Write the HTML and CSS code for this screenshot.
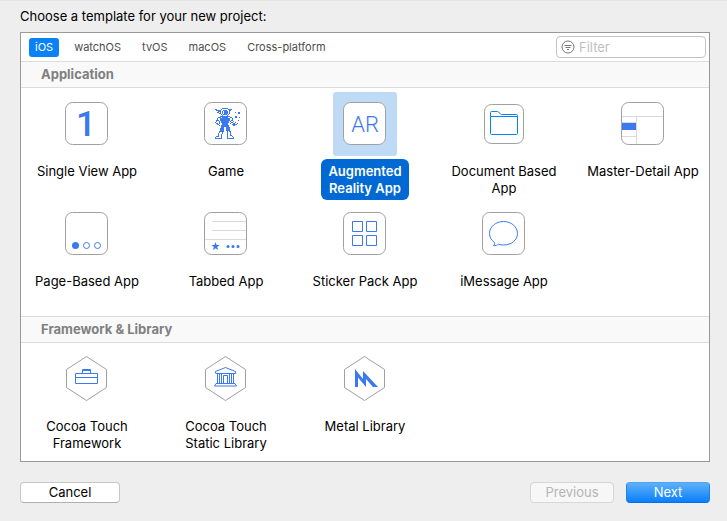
FILE: index.html
```
<!DOCTYPE html>
<html lang="en">
<head>
	<meta charset="UTF-8">
	<title>New Project</title>
	<link rel="stylesheet" href="styles.css">
</head>
<body>
	<h1 class="title">Choose a template for your new project:</h1>
	<main class="panel">
		<div class="toolbar">
			<nav class="tabs">
				<button type="button" class="tab active">iOS</button>
				<button type="button" class="tab">watchOS</button>
				<button type="button" class="tab">tvOS</button>
				<button type="button" class="tab">macOS</button>
				<button type="button" class="tab">Cross-platform</button>
			</nav>
			<label class="filter">
				<svg width="14" height="14" viewBox="0 0 14 14" fill="none" stroke="#777">
					<circle cx="7" cy="7" r="6"/>
					<path d="M3.5 5.5h7M4.5 7.5h5M6 9.5h2"/>
				</svg>
				<input type="text" placeholder="Filter" aria-label="Filter">
			</label>
		</div>

		<section>
			<h2 class="heading">Application</h2>
			<div class="grid">
				<button type="button" class="item">
					<svg class="icon" viewBox="0 0 64 64">
						<rect class="frame" x="10.5" y="10.5" width="42" height="42" rx="7"/>
						<text class="one" x="31" y="44">1</text>
					</svg>
					<span class="label">Single View App</span>
				</button>
				<button type="button" class="item">
					<svg class="icon" viewBox="0 0 64 64">
						<rect class="frame" x="10.5" y="10.5" width="42" height="42" rx="7"/>
						<!-- pixel robot, one run per row -->
						<path class="line" shape-rendering="crispEdges" transform="translate(21 16.5)" d="M7 0h6M0 1h2M6 1h1M13 1h4M1 2h5M8 2h4M14 2h2M3 3h3M7 3h1M9 3h4M14 3h1M2 4h2M5 4h1M7 4h1M9 4h4M14 4h1M4 5h2M7 5h1M9 5h4M14 5h1M6 6h1M8 6h4M13 6h1M7 7h1M12 7h1M5 8h10M3 9h3M7 9h6M15 9h2M2 10h1M5 10h10M17 10h1M2 11h1M5 11h10M17 11h1M1 12h3M5 12h10M16 12h2M1 13h1M4 13h1M6 13h8M15 13h1M18 13h1M0 14h1M4 14h1M6 14h8M16 14h2M20 14h1M1 15h2M4 15h1M7 15h6M15 15h1M18 15h2M22 15h1M2 16h2M7 16h6M17 16h5M4 17h1M6 17h8M18 17h2M6 18h8M6 19h3M11 19h4M5 20h4M11 20h4M5 21h4M11 21h4M5 22h4M11 22h4M4 23h5M12 23h1M14 23h2M4 24h1M7 24h1M12 24h1M15 24h1M3 25h1M7 25h1M12 25h1M15 25h1M3 26h1M6 26h1M12 26h1M15 26h1M3 27h1M6 27h1M12 27h1M15 27h2M1 28h3M6 28h1M12 28h1M17 28h1M0 29h1M6 29h1M12 29h1M18 29h1M0 30h7M12 30h7M20 4h1M23 4h2M23 5h2M20 8h2M20 9h2M24 9h1M23 12h1"/>
					</svg>
					<span class="label">Game</span>
				</button>
				<button type="button" class="item selected">
					<svg class="icon" viewBox="0 0 64 64">
						<rect class="frame" x="10.5" y="10.5" width="42" height="42" rx="7"/>
						<text class="ar" x="32" y="40">AR</text>
					</svg>
					<span class="label">Augmented<br>Reality App</span>
				</button>
				<button type="button" class="item">
					<svg class="icon" viewBox="0 0 64 64">
						<rect class="frame" x="12.5" y="12.5" width="39" height="39" rx="7"/>
						<path class="line folder" d="M18.5 24.5v-4q0-1 1-1h6q1 0 2 1.5t2 1.5h15q1 0 1 1v18q0 1-1 1h-25q-1 0-1-1v-17h27"/>
					</svg>
					<span class="label">Document Based<br>App</span>
				</button>
				<button type="button" class="item">
					<svg class="icon" viewBox="0 0 64 64">
						<path class="rule" d="M11 24.5h41M25.5 25v28M11 30.5h14M11 37.5h14M11 44.5h14"/>
						<path class="solid" d="M11 31h14v7h-14z"/>
						<rect class="frame open" x="10.5" y="10.5" width="42" height="42" rx="7"/>
					</svg>
					<span class="label">Master-Detail App</span>
				</button>
				<button type="button" class="item">
					<svg class="icon" viewBox="0 0 64 64">
						<rect class="frame" x="10.5" y="10.5" width="42" height="42" rx="7"/>
						<circle class="solid" cx="20.5" cy="43.5" r="3.5"/>
						<circle class="line" cx="31.5" cy="43.5" r="3"/>
						<circle class="line" cx="42.5" cy="43.5" r="3"/>
					</svg>
					<span class="label">Page-Based App</span>
				</button>
				<button type="button" class="item">
					<svg class="icon" viewBox="0 0 64 64">
						<path class="rule" d="M18 19.5h34M18 28.5h34M11 37.5h41"/>
						<path class="solid" d="M21.5 40l1.100 2.900 3 .1-2.400 1.900.9 3-2.600-1.700-2.600 1.700.9-3-2.400-1.900 3-.1z"/>
						<circle class="solid" cx="34" cy="44.5" r="1.5"/>
						<circle class="solid" cx="39" cy="44.5" r="1.5"/>
						<circle class="solid" cx="44" cy="44.5" r="1.5"/>
						<rect class="frame open" x="10.5" y="10.5" width="42" height="42" rx="7"/>
					</svg>
					<span class="label">Tabbed App</span>
				</button>
				<button type="button" class="item">
					<svg class="icon" viewBox="0 0 64 64">
						<rect class="frame" x="10.5" y="10.5" width="42" height="42" rx="7"/>
						<path class="line" d="M19.5 19.5h10v10h-10zM33.5 19.5h10v10h-10zM19.5 33.5h10v10h-10zM33.5 33.5h10v10h-10z"/>
					</svg>
					<span class="label">Sticker Pack App</span>
				</button>
				<button type="button" class="item">
					<svg class="icon" viewBox="0 0 64 64">
						<rect class="frame" x="10.5" y="10.5" width="42" height="42" rx="7"/>
						<path class="line" d="M22.5 40.5c-3.200-2.200-5-5.400-5-9 0-6.700 6.200-12 14-12s14 5.300 14 12-6.200 11.500-14 11.500c-1.900 0-3.500-.3-5-.8-1.400 1-3 1.600-5 1.500 1-1 1.400-2 1-3.200z"/>
					</svg>
					<span class="label">iMessage App</span>
				</button>
			</div>
		</section>

		<section>
			<h2 class="heading">Framework &amp; Library</h2>
			<div class="grid">
				<button type="button" class="item">
					<svg class="icon" viewBox="0 0 64 64">
						<path class="frame" d="M31.5 9.5l20 13v18l-20 13-20-13v-18z"/>
						<path class="line" d="M20.5 26.5h22v10h-22zM20.5 30.5h22M27.5 26v-3.500h8V26M28 23.5h7"/>
					</svg>
					<span class="label">Cocoa Touch<br>Framework</span>
				</button>
				<button type="button" class="item">
					<svg class="icon" viewBox="0 0 64 64">
						<path class="frame" d="M31.5 9.5l20 13v18l-20 13-20-13v-18z"/>
						<path class="line" d="M21.5 26v-1.500l10-4 10 4V26.5h-20M23.5 27v9M25.5 27v9M27.5 27v9M35.5 27v9M37.5 27v9M39.5 27v9M29.5 36v-7.500h4V36M22 36.5h19l1.500 2.500h-22z"/>
					</svg>
					<span class="label">Cocoa Touch<br>Static Library</span>
				</button>
				<button type="button" class="item">
					<svg class="icon" viewBox="0 0 64 64">
						<path class="frame" d="M31.5 9.5l20 13v18l-20 13-20-13v-18z"/>
						<path class="solid" d="M22 22l8 10v-8l15 16h-5l-7-8v8l-8-9.500V40h-3z"/>
					</svg>
					<span class="label">Metal Library</span>
				</button>
			</div>
		</section>
	</main>
	<footer class="footer">
		<button type="button" class="btn cancel">Cancel</button>
		<button type="button" class="btn" disabled>Previous</button>
		<button type="button" class="btn next">Next</button>
	</footer>
</body>
</html>
```
FILE: styles.css
```
*{
	padding:0;
	margin:0;
	box-sizing:border-box;
}
body{
	background:#eee;
	border-top:1px solid #e5e5e5;
	padding:7px 17px 18px 20px;
	font-family:Inter,"Liberation Sans",sans-serif;
	font-size:13px;
	line-height:17px;
	color:#000;
}
button,input{
	font-family:inherit;
	font-size:inherit;
	line-height:inherit;
	color:inherit;
	border:none;
	background:none;
	outline:none;
}
.title{
	font-size:13px;
	font-weight:normal;
	margin-bottom:7px;
}
.panel{
	background:#fff;
	border:1px solid #999;
}
.toolbar{
	display:flex;
	align-items:center;
	justify-content:space-between;
	height:28px;
	padding:0 3px 0 8px;
}
.tabs{
	display:flex;
	gap:9px;
}
.tab{
	height:19px;
	padding:0 6px;
	border-radius:3px;
	font-size:11px;
	color:#4d4d4d;
}
.tab.active{
	background:#0a82f7;
	color:#fff;
}
.filter{
	display:flex;
	align-items:center;
	gap:4px;
	width:150px;
	height:22px;
	padding:0 4px;
	border:1px solid #c4c4c4;
	border-radius:4px;
}
.filter input{
	flex:1;
	min-width:0;
}
.filter input::placeholder{
	color:#bfbfbf;
}
.heading{
	height:27px;
	padding:0 20px;
	border-top:1px solid #dcdcdc;
	border-bottom:1px solid #dcdcdc;
	background:#f9f9f9;
	font-size:13px;
	font-weight:700;
	line-height:25px;
	color:#808080;
}
.grid{
	display:grid;
	grid-template-columns:repeat(5,1fr);
	grid-auto-rows:minmax(108px,auto);
	gap:2px 9px;
	padding:4px 1px 6px;
}
.item{
	display:flex;
	flex-direction:column;
	align-items:center;
	gap:3px;
}
.icon{
	width:64px;
	height:64px;
	border-radius:3px;
}
.label{
	padding:4px 7px 3px;
	border-radius:6px;
	white-space:nowrap;
}
.selected .icon{
	background:#bfdaf5;
}
.selected .label{
	background:#0069d3;
	color:#fff;
	font-weight:600;
}
.frame{
	fill:#fff;
	stroke:#a0a0a0;
}
.frame.open{
	fill:none;
}
.line{
	fill:none;
	stroke:#3b79f0;
}
.folder{
	stroke:#0a82f0;
}
.solid{
	fill:#3b79f0;
}
.rule{
	fill:none;
	stroke:#dadada;
}
.one,.ar{
	fill:#3b79f0;
	font-family:Roboto,sans-serif;
	text-anchor:middle;
}
.one{
	font-size:35px;
	font-weight:500;
}
.ar{
	font-size:22px;
	font-weight:300;
}
.footer{
	display:flex;
	gap:12px;
	margin-top:20px;
}
.btn{
	width:84px;
	height:21px;
	border:1px solid #c6c6c6;
	border-bottom-color:#b0b0b0;
	border-radius:4px;
	background:#fff;
}
.btn:disabled{
	background:#f7f7f7;
	border-color:#d6d6d6;
	color:#b5b5b5;
}
.cancel{
	width:100px;
	margin-right:auto;
}
.next{
	border-color:#4ba3f7 #1a83f5 #0a6cec;
	background:linear-gradient(#5fb0f8,#0a80fb);
	color:#fff;
}
```
